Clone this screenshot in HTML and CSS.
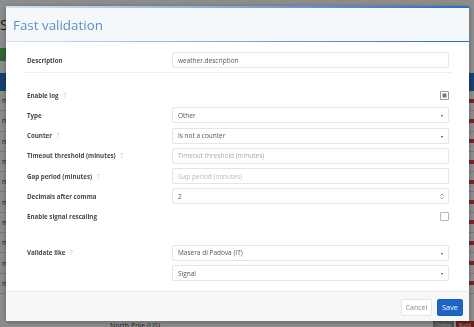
FILE: index.html
```html
<!DOCTYPE html>
<html lang="en">
<head>
  <meta charset="UTF-8" />
  <title>Fast validation</title>
  <link rel="stylesheet" href="styles.css">
</head>
<body>

  <!-- Page behind the dialog -->
  <div class="page">
    <h1 class="page-title">S</h1>
    <div class="btn-add"></div>
    <div class="table-head"></div>
    <div class="table-row"><span>m</span><span class="flag"></span></div>
    <div class="table-row"><span>m</span><span class="flag"></span></div>
    <div class="table-row"><span>m</span><span class="flag"></span></div>
    <div class="table-row"><span>m</span><span class="flag"></span></div>
    <div class="table-row"><span>m</span><span class="flag"></span></div>
    <div class="table-row"><span>m</span><span class="flag"></span></div>
    <div class="table-row"><span>m</span><span class="flag"></span></div>
    <div class="table-row"><span>m</span><span class="flag"></span></div>
    <div class="table-row"><span>m</span><span class="flag"></span></div>
    <div class="table-row"><span>m</span><span class="flag"></span></div>
    <div class="table-row last">
      <span class="place">North Pole (US)</span>
      <span class="badge">Online</span>
      <span class="badge red">Build</span>
    </div>
  </div>

  <div class="backdrop"></div>

  <!-- Dialog -->
  <div class="modal">
    <div class="modal-header">
      <h2>Fast validation</h2>
    </div>

    <div class="modal-body">
      <div class="row first">
        <label>Description</label>
        <div class="control">weather.description</div>
      </div>
      <hr class="divider">

      <div class="row">
        <label>Enable log <span class="help">?</span></label>
        <span class="check checked"></span>
      </div>
      <div class="row">
        <label>Type</label>
        <div class="control select">Other</div>
      </div>
      <div class="row">
        <label>Counter <span class="help">?</span></label>
        <div class="control select">Is not a counter</div>
      </div>
      <div class="row">
        <label>Timeout threshold (minutes) <span class="help">?</span></label>
        <div class="control placeholder">Timeout threshold (minutes)</div>
      </div>
      <div class="row">
        <label>Gap period (minutes) <span class="help">?</span></label>
        <div class="control placeholder light">Gap period (minutes)</div>
      </div>
      <div class="row">
        <label>Decimals after comma</label>
        <div class="control">2
          <svg class="spin" width="4" height="7" viewBox="0 0 4 7">
            <path d="M0.6 2.6 L2 1.1 L3.4 2.6 M0.6 4.4 L2 5.9 L3.4 4.4" stroke="#777" stroke-width="0.8" fill="none"/>
          </svg>
        </div>
      </div>
      <div class="row">
        <label>Enable signal rescaling</label>
        <span class="check"></span>
      </div>

      <div class="row spaced">
        <label>Validate like <span class="help">?</span></label>
        <div class="control select">Masera di Padova (IT)</div>
      </div>
      <div class="row">
        <label></label>
        <div class="control select">Signal</div>
      </div>
    </div>

    <div class="modal-footer">
      <button class="btn btn-cancel">Cancel</button>
      <button class="btn btn-save">Save</button>
    </div>
  </div>

</body>
</html>
```

FILE: styles.css
```css
body {
  margin: 0;
  width: 474px;
  height: 327px;
  overflow: hidden;
  font-family: "Open Sans", "Liberation Sans", sans-serif;
  background-color: #fff;
}

/* page behind the dialog */
.page-title {
  margin: 0;
  padding: 16px 0 0 0;
  font-size: 15px;
  font-weight: 400;
  line-height: 16px;
  color: #333;
}

.btn-add {
  margin-top: 16px;
  width: 40px;
  height: 13px;
  background-color: #5cb85c;
}

.table-head {
  margin-top: 12px;
  height: 18px;
  background-color: #2f74c8;
}

.table-row {
  display: flex;
  align-items: center;
  height: 20.3px;
  border-bottom: 1px solid #d8d8d8;
  box-sizing: border-box;
  font-size: 7px;
  color: #333;
  padding-left: 2px;
}

.flag {
  margin-left: auto;
  width: 8px;
  height: 4px;
  background-color: #d9443b;
}

.table-row.last {
  height: 36px;
  align-items: flex-end;
  border-bottom: 0;
}

.place {
  margin-left: 108px;
}

.badge {
  margin-left: auto;
  padding: 0 3px;
  background-color: #999;
  color: #fff;
  font-size: 5px;
  line-height: 9px;
}

.badge.red {
  margin-left: 2px;
  background-color: #c9302c;
}

.backdrop {
  position: fixed;
  inset: 0;
  background-color: rgba(0, 0, 0, 0.45);
}

/* dialog */
.modal {
  position: fixed;
  left: 6px;
  top: 6px;
  width: 463px;
  height: 315px;
  display: flex;
  flex-direction: column;
  background-color: #fff;
  box-shadow: 0 1px 5px rgba(0, 0, 0, 0.3);
}

.modal-header {
  height: 36px;
  box-sizing: border-box;
  border-top: 2px solid #2d6fc4;
  border-image: linear-gradient(to right, #d3e3f4, #2a6bc2) 1;
  border-bottom: 1px solid #e5e9ee;
  background-color: #f5f8fb;
  padding-left: 7px;
  display: flex;
  align-items: center;
}

.modal-header h2 {
  margin: 0;
  font-size: 13.4px;
  font-weight: 400;
  color: #5b8ec4;
}

.modal-body {
  flex: 1;
  padding: 10px 20px 0 21px;
}

.row {
  display: grid;
  grid-template-columns: 145px 1fr;
  align-items: center;
  height: 16px;
  margin-bottom: 4.3px;
}

.row.first {
  margin-bottom: 0;
}

.row.spaced {
  margin-top: 20px;
}

label {
  font-size: 6.2px;
  font-weight: 700;
  color: #474747;
}

.help {
  margin-left: 3px;
  font-weight: 400;
  color: #bbb;
}

.divider {
  border: 0;
  border-top: 1px solid #eceef1;
  margin: 4px -3px 14px;
}

.control {
  position: relative;
  height: 16px;
  box-sizing: border-box;
  border: 1px solid #e3e5e8;
  border-radius: 2px;
  padding: 0 5px;
  display: flex;
  align-items: center;
  font-size: 6.5px;
  color: #555;
}

.placeholder {
  color: #a9a9a9;
}

.placeholder.light {
  color: #bcbcbc;
}

.select::after {
  content: "";
  position: absolute;
  right: 5px;
  top: 7px;
  border-left: 1.5px solid transparent;
  border-right: 1.5px solid transparent;
  border-top: 2px solid #444;
}

.spin {
  position: absolute;
  right: 4px;
  top: 4px;
}

.check {
  justify-self: end;
  width: 9px;
  height: 9px;
  box-sizing: border-box;
  border: 1px solid #b5b5b5;
  border-radius: 1px;
  background-color: #fff;
}

.check.checked {
  border-color: #999;
  background-color: #777;
  box-shadow: inset 0 0 0 1.5px #fff;
}

.modal-footer {
  height: 30px;
  box-sizing: border-box;
  border-top: 1px solid #e6e9ed;
  background-color: #f7f8fa;
  display: flex;
  justify-content: flex-end;
  align-items: center;
  gap: 5px;
  padding: 1px 6px 0 0;
}

.btn {
  height: 17px;
  padding: 0;
  border-radius: 2px;
  font-family: "Open Sans", "Liberation Sans", sans-serif;
}

.btn-cancel {
  width: 31px;
  border: 1px solid #e6e6e6;
  background-color: #fff;
  color: #8a8a8a;
  font-size: 7px;
}

.btn-save {
  width: 26px;
  border: 1px solid #1a5fb8;
  background-color: #1c64c6;
  color: #fff;
  font-size: 7.4px;
}
```
